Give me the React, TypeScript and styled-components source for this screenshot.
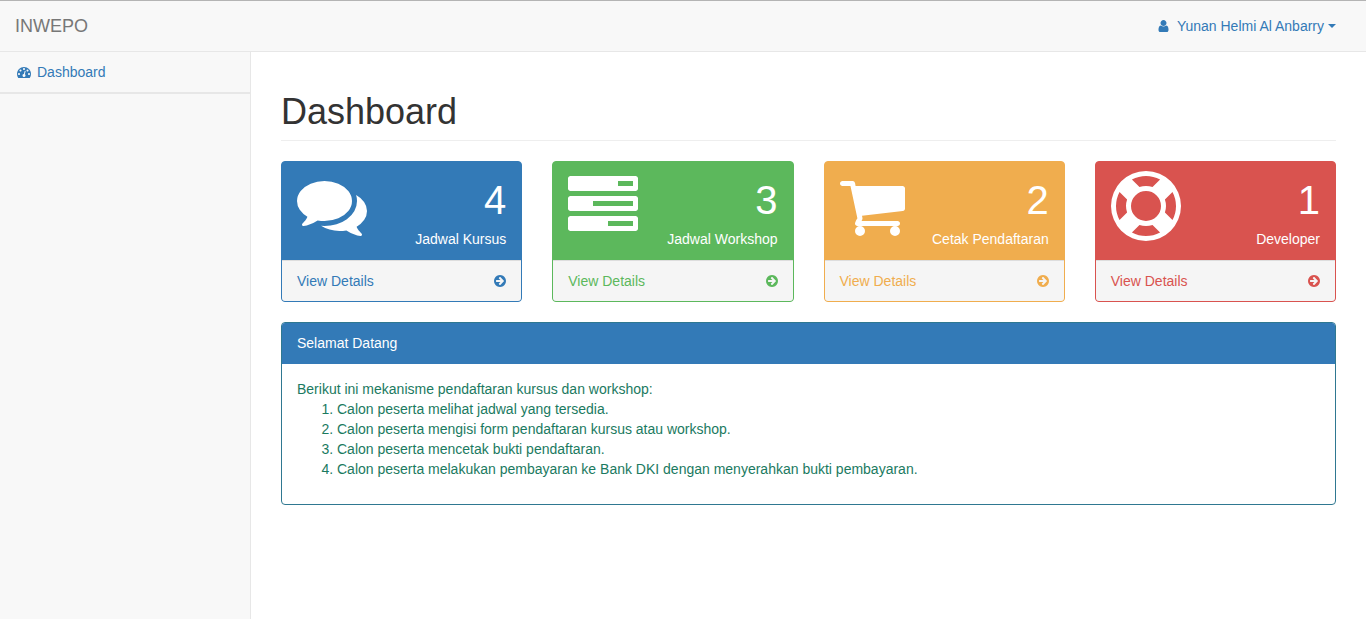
import React from "react";
import styled, { createGlobalStyle } from "styled-components";

const GlobalStyle = createGlobalStyle`
  *, *::before, *::after { box-sizing: border-box; }
  body {
    margin: 0;
    background: #f8f8f8;
    color: #333;
    font-family: "Liberation Sans", Arial, sans-serif;
    font-size: 14px;
    line-height: 20px;
  }
  a { text-decoration: none; }
`;

const Page = styled.div`
  display: flex;
  flex-direction: column;
  min-height: 100vh;
`;

const Navbar = styled.header`
  display: flex;
  align-items: center;
  justify-content: space-between;
  height: 52px;
  padding: 0 30px 0 15px;
  background: #f8f8f8;
  border-top: 1px solid #b4b4b4;
  border-bottom: 1px solid #e7e7e7;
`;

const Brand = styled.a`
  color: #777;
  font-size: 18px;
`;

const UserMenu = styled.button`
  display: flex;
  align-items: center;
  padding: 0;
  border: 0;
  background: none;
  color: #337ab7;
  font: inherit;
  cursor: pointer;
`;

const UserName = styled.span`
  margin: 0 4px 0 8px;
`;

const Caret = styled.span`
  border-top: 4px solid;
  border-left: 4px solid transparent;
  border-right: 4px solid transparent;
`;

const Body = styled.div`
  display: flex;
  flex: 1;
`;

const Sidebar = styled.nav`
  flex: 0 0 250px;
`;

const SideLink = styled.a`
  display: flex;
  align-items: center;
  gap: 6px;
  padding: 10px 17px;
  border-bottom: 2px solid #e7e7e7;
  color: #337ab7;
`;

const Main = styled.main`
  flex: 1;
  min-width: 0;
  padding: 0 30px;
  border-left: 1px solid #e7e7e7;
  background: #fff;
`;

const Title = styled.h1`
  margin: 40px 0 20px;
  padding-bottom: 8px;
  border-bottom: 1px solid #eee;
  font-size: 36px;
  font-weight: 500;
  line-height: 40px;
`;

const Cards = styled.div`
  display: grid;
  grid-template-columns: repeat(4, 1fr);
  gap: 30px;
  margin-bottom: 20px;
`;

const Card = styled.section<{ $color: string }>`
  overflow: hidden;
  border: 1px solid ${(p) => p.$color};
  border-radius: 4px;
  background: ${(p) => p.$color};
`;

const CardHead = styled.div`
  display: flex;
  justify-content: space-between;
  padding: 9px 15px 11px;
  color: #fff;
`;

const Summary = styled.div`
  text-align: right;
`;

const Count = styled.div`
  font-size: 40px;
  line-height: 58px;
`;

const CardLink = styled.a<{ $color: string }>`
  display: flex;
  align-items: center;
  justify-content: space-between;
  padding: 10px 15px;
  border-top: 1px solid #ddd;
  background: #f5f5f5;
  color: ${(p) => p.$color};
`;

const Panel = styled.section`
  overflow: hidden;
  border: 1px solid #2f7891;
  border-radius: 4px;
`;

const PanelHead = styled.div`
  padding: 10px 15px 11px;
  background: #337ab7;
  color: #fff;
`;

const PanelBody = styled.div`
  padding: 15px;
  color: #1b7a5f;
`;

const Intro = styled.p`
  margin: 0;
`;

const Steps = styled.ol`
  margin: 0 0 10px;
  padding-left: 40px;
`;

const Glyph = styled.svg`
  display: block;
  flex: none;
  fill: currentColor;
`;

const paths = {
  user: "M1536 1399q0 109-62.5 187t-150.5 78h-854q-88 0-150.5-78t-62.5-187q0-85 8.5-160.5t31.5-152 58.5-131 94-89 134.5-34.5q131 128 313 128t313-128q76 0 134.5 34.5t94 89 58.5 131 31.5 152 8.5 160.5zm-256-887q0 159-112.5 271.5t-271.5 112.5-271.5-112.5-112.5-271.5 112.5-271.5 271.5-112.5 271.5 112.5 112.5 271.5z",
  gauge: "M384 1152q0-53-37.5-90.5t-90.5-37.5-90.5 37.5-37.5 90.5 37.5 90.5 90.5 37.5 90.5-37.5 37.5-90.5zm192-448q0-53-37.5-90.5t-90.5-37.5-90.5 37.5-37.5 90.5 37.5 90.5 90.5 37.5 90.5-37.5 37.5-90.5zm428 481l101-382q6-26-7.5-48.5t-38.5-29.5-48 6.5-30 39.5l-101 382q-60 5-107 43.5t-63 98.5q-20 77 20 146t117 89 146-20 89-117q16-60-6-117t-72-91zm660-33q0-53-37.5-90.5t-90.5-37.5-90.5 37.5-37.5 90.5 37.5 90.5 90.5 37.5 90.5-37.5 37.5-90.5zm-640-640q0-53-37.5-90.5t-90.5-37.5-90.5 37.5-37.5 90.5 37.5 90.5 90.5 37.5 90.5-37.5 37.5-90.5zm448 192q0-53-37.5-90.5t-90.5-37.5-90.5 37.5-37.5 90.5 37.5 90.5 90.5 37.5 90.5-37.5 37.5-90.5zm320 448q0 261-141 483-19 29-54 29h-1402q-35 0-54-29-141-221-141-483 0-182 71-348t191-286 286-191 348-71 348 71 286 191 191 286 71 348z",
  comments: "M1408 768q0 139-94 257t-256.5 186.5-353.5 68.5q-86 0-176-16-124 88-278 128-36 9-86 16h-3q-11 0-20.5-8t-11.5-21q-1-3-1-6.5t.5-6.5 2-6l2.5-5 3.5-5.5 4-5 4.5-5 4-4.5q5-6 23-25t26-29.5 22.5-29 25-38.5 20.5-44q-124-72-195-177t-71-224q0-139 94-257t256.5-186.5 353.5-68.5 353.5 68.5 256.5 186.5 94 257zm384 256q0 120-71 224.5t-195 176.5q10 24 20.5 44t25 38.5 22.5 29 26 29.5 23 25q1 1 4 4.5t4.5 5 4 5 3.5 5.5l2.5 5 2 6 .5 6.5-1 6.5q-3 14-13 22t-22 7q-50-7-86-16-154-40-278-128-90 16-176 16-271 0-472-132 58 4 88 4 161 0 309-45t264-129q125-92 192-212t67-254q0-77-23-152 129 71 204 178t75 230z",
  tasks: "M1024 1408h640v-128h-640v128zm-384-512h1024v-128h-1024v128zm640-512h384v-128h-384v128zm512 832v256q0 26-19 45t-45 19h-1664q-26 0-45-19t-19-45v-256q0-26 19-45t45-19h1664q26 0 45 19t19 45zm0-512v256q0 26-19 45t-45 19h-1664q-26 0-45-19t-19-45v-256q0-26 19-45t45-19h1664q26 0 45 19t19 45zm0-512v256q0 26-19 45t-45 19h-1664q-26 0-45-19t-19-45v-256q0-26 19-45t45-19h1664q26 0 45 19t19 45z",
  cart: "M704 1536q0 52-38 90t-90 38-90-38-38-90 38-90 90-38 90 38 38 90zm896 0q0 52-38 90t-90 38-90-38-38-90 38-90 90-38 90 38 38 90zm128-1088v512q0 24-16.5 42.5t-40.5 21.5l-1044 122q13 60 13 70 0 16-24 64h920q26 0 45 19t19 45-19 45-45 19h-1024q-26 0-45-19t-19-45q0-11 8-31.5t16-36 21.5-40 15.5-29.5l-177-823h-204q-26 0-45-19t-19-45 19-45 45-19h256q16 0 28.5 6.5t19.5 15.5 13 24.5 8 26 5.5 29.5 4.5 26h1201q26 0 45 19t19 45z",
  ring: "M896 0q182 0 348 71t286 191 191 286 71 348-71 348-191 286-286 191-348 71-348-71-286-191-191-286-71-348 71-348 191-286 286-191 348-71zm0 128q-190 0-361 90l194 194q82-28 167-28t167 28l194-194q-171-90-361-90zm-678 1129l194-194q-28-82-28-167t28-167l-194-194q-90 171-90 361t90 361zm678 407q190 0 361-90l-194-194q-82 28-167 28t-167-28l-194 194q171 90 361 90zm0-384q159 0 271.5-112.5t112.5-271.5-112.5-271.5-271.5-112.5-271.5 112.5-112.5 271.5 112.5 271.5 271.5 112.5zm484-217l194 194q90-171 90-361t-90-361l-194 194q28 82 28 167t-28 167z",
  arrow: "M1413 896q0-27-18-45l-91-91-362-362q-18-18-45-18t-45 18l-91 91q-18 18-18 45t18 45l189 189h-502q-26 0-45 19t-19 45v128q0 26 19 45t45 19h502l-189 189q-19 19-19 45t19 45l91 91q18 18 45 18t45-18l91-91 362-362q18-18 18-45zm251 0q0 209-103 385.5t-279.5 279.5-385.5 103-385.5-103-279.5-279.5-103-385.5 103-385.5 279.5-279.5 385.5-103 385.5 103 279.5 279.5 103 385.5z",
};

type IconName = keyof typeof paths;

type IconProps = { name: IconName; width?: number; height?: number; box?: string };

function Icon({ name, width = 14, height = 14, box = "0 0 1792 1792" }: IconProps) {
  return (
    <Glyph width={width} height={height} viewBox={box} aria-hidden="true">
      <path fillRule="evenodd" d={paths[name]} />
    </Glyph>
  );
}

const cards: { icon: IconName; box?: string; count: number; label: string; color: string }[] = [
  { icon: "comments", count: 4, label: "Jadwal Kursus", color: "#337ab7" },
  { icon: "tasks", count: 3, label: "Jadwal Workshop", color: "#5cb85c" },
  { icon: "cart", box: "64 0 1792 1792", count: 2, label: "Cetak Pendaftaran", color: "#f0ad4e" },
  { icon: "ring", count: 1, label: "Developer", color: "#d9534f" },
];

const steps = [
  "Calon peserta melihat jadwal yang tersedia.",
  "Calon peserta mengisi form pendaftaran kursus atau workshop.",
  "Calon peserta mencetak bukti pendaftaran.",
  "Calon peserta melakukan pembayaran ke Bank DKI dengan menyerahkan bukti pembayaran.",
];

export default function App() {
  return (
    <Page>
      <GlobalStyle />
      <Navbar>
        <Brand href="#">INWEPO</Brand>
        <UserMenu type="button">
          <Icon name="user" width={11} height={12} box="256 128 1280 1536" />
          <UserName>Yunan Helmi Al Anbarry</UserName>
          <Caret />
        </UserMenu>
      </Navbar>
      <Body>
        <Sidebar>
          <SideLink href="#">
            <Icon name="gauge" />
            Dashboard
          </SideLink>
        </Sidebar>
        <Main>
          <Title>Dashboard</Title>
          <Cards>
            {cards.map((c) => (
              <Card key={c.label} $color={c.color}>
                <CardHead>
                  <Icon name={c.icon} width={70} height={70} box={c.box} />
                  <Summary>
                    <Count>{c.count}</Count>
                    <div>{c.label}</div>
                  </Summary>
                </CardHead>
                <CardLink href="#" $color={c.color}>
                  View Details
                  <Icon name="arrow" width={12} height={12} box="128 128 1536 1536" />
                </CardLink>
              </Card>
            ))}
          </Cards>
          <Panel>
            <PanelHead>Selamat Datang</PanelHead>
            <PanelBody>
              <Intro>Berikut ini mekanisme pendaftaran kursus dan workshop:</Intro>
              <Steps>
                {steps.map((s) => (
                  <li key={s}>{s}</li>
                ))}
              </Steps>
            </PanelBody>
          </Panel>
        </Main>
      </Body>
    </Page>
  );
}
